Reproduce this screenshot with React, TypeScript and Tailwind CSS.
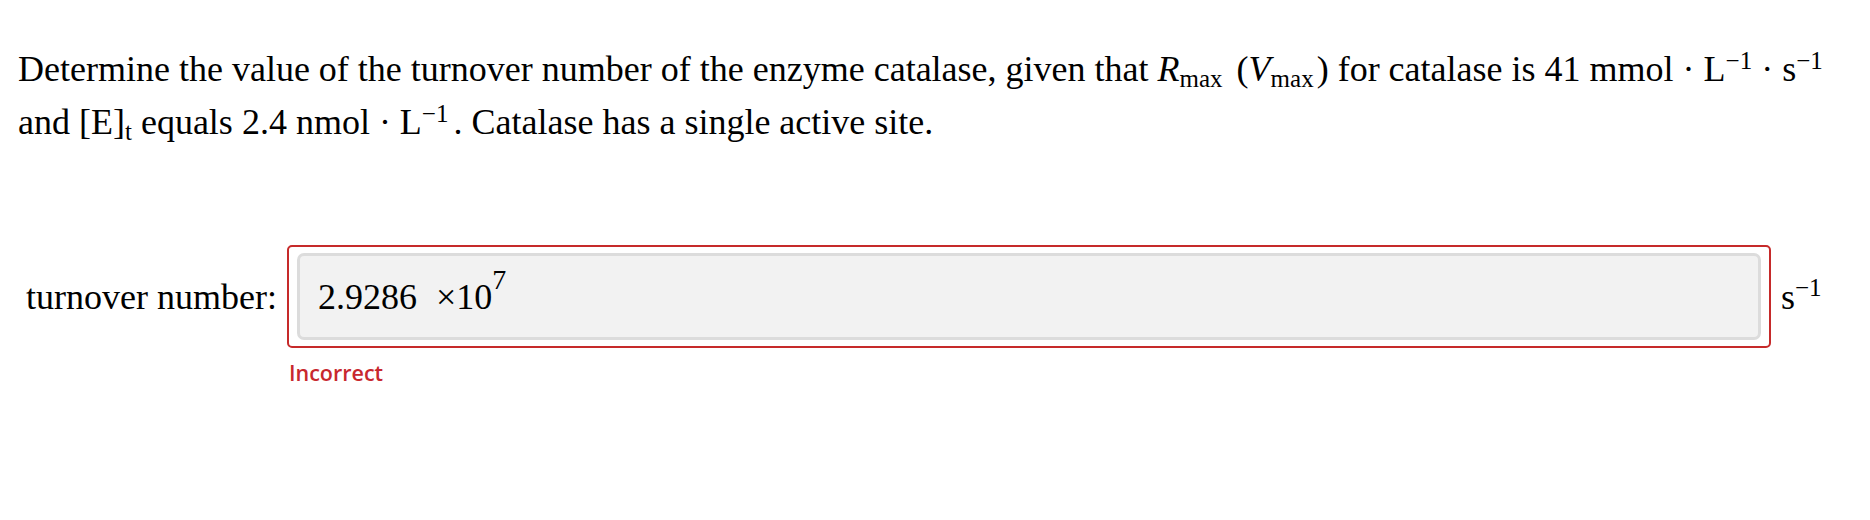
export default function App() {
    const serif = "font-['Liberation_Serif','Times_New_Roman',serif]"

    return (
        <div className={"min-h-[520px] w-full bg-white text-black " + serif}>
            <p className="whitespace-nowrap px-[18px] pt-[43px] text-[36px] leading-[53px]">
                Determine the value of the turnover number of the enzyme catalase, given that{" "}
                <i>R</i><sub className="text-[25px]">max</sub>{" "}
                <span className="ml-[5px]">(</span><i>V</i><sub className="text-[25px]">max</sub><span className="ml-[3px]">)</span> for catalase is 41 mmol · L<sup className="text-[25px]">−1</sup> · s<sup className="text-[25px]">−1</sup>
                <br />
                and [E]<sub className="text-[25px]">t</sub> equals 2.4 nmol · L<sup className="text-[25px]">−1</sup><span className="ml-[5px]">.</span> Catalase has a single active site.
            </p>

            <div className="mt-[96px] grid grid-cols-[auto_auto_auto] justify-start gap-x-[10px] pl-[26px]">
                <div className="self-center text-[36px] leading-none">turnover number:</div>

                <div className="w-[1484px] rounded-[5px] border-2 border-[#c62a2a] px-[8px] py-[6px]">
                    <div className="flex h-[87px] items-center rounded-[7px] border-[3px] border-[#dcdcdc] bg-[#f2f2f2] pl-[18px] text-[36px]">
                        <span>2.9286</span>
                        <span className="ml-[19px]">×10<sup className="top-[-20px] text-[28px]">7</sup></span>
                    </div>
                </div>

                <div className="self-center text-[36px] leading-none">
                    s<sup className="text-[25px]">−1</sup>
                </div>

                <div />
                <div className="mt-[11px] pl-[2px] font-['Open_Sans',sans-serif] text-[21.5px] font-semibold leading-[28px] text-[#c8282e]">
                    Incorrect
                </div>
                <div />
            </div>
        </div>
    )
}
